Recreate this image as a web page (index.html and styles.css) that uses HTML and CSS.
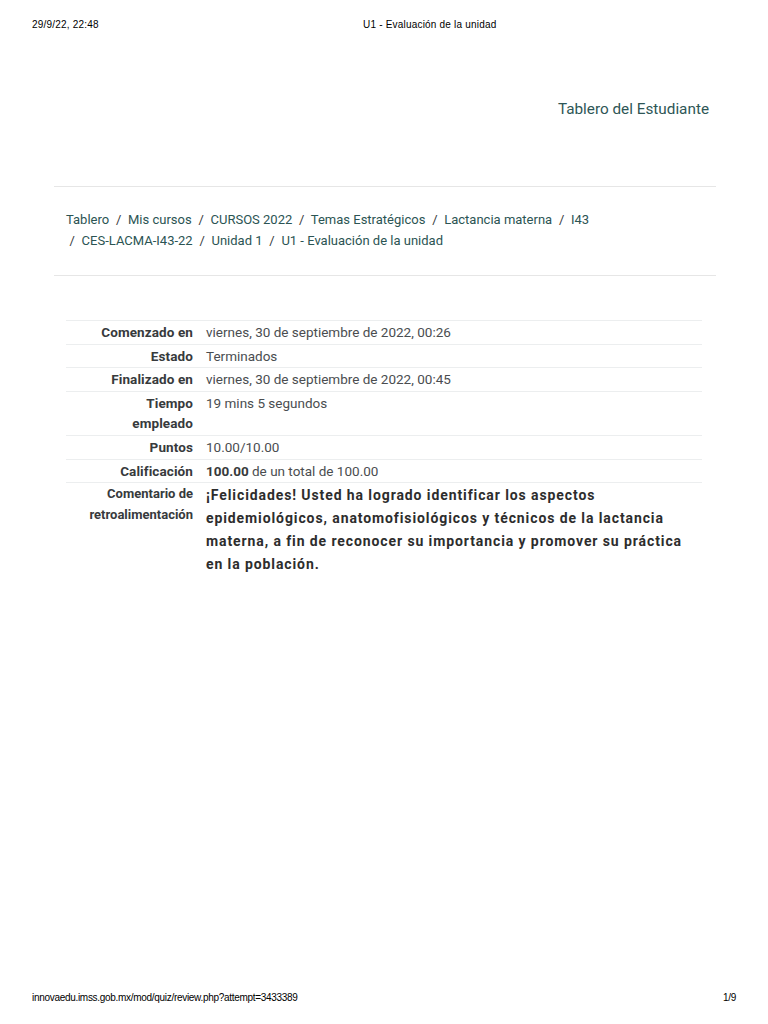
FILE: index.html
```html
<!DOCTYPE html>
<html lang="es">

<head>
    <meta charset="UTF-8">
    <meta name="viewport" content="width=device-width, initial-scale=1.0">
    <title>U1 - Evaluación de la unidad</title>
    <link rel="stylesheet" href="styles.css">
</head>

<body>
    <div class="page">
        <header class="print-header">
            <span class="print-date">29/9/22, 22:48</span>
            <span class="print-title">U1 - Evaluación de la unidad</span>
        </header>

        <div class="site-nav">
            <a href="#" class="site-link">Tablero del Estudiante</a>
        </div>

        <nav class="breadcrumb">
            <a href="#">Tablero</a> <span class="sep">/</span>
            <a href="#">Mis cursos</a> <span class="sep">/</span>
            <a href="#">CURSOS 2022</a> <span class="sep">/</span>
            <a href="#">Temas Estratégicos</a> <span class="sep">/</span>
            <a href="#">Lactancia materna</a> <span class="sep">/</span>
            <a href="#">I43</a><br>
            <span class="sep">/</span> <a href="#">CES-LACMA-I43-22</a> <span class="sep">/</span>
            <a href="#">Unidad 1</a> <span class="sep">/</span>
            <a href="#">U1 - Evaluación de la unidad</a>
        </nav>

        <table class="summary">
            <tr>
                <th>Comenzado en</th>
                <td>viernes, 30 de septiembre de 2022, 00:26</td>
            </tr>
            <tr>
                <th>Estado</th>
                <td>Terminados</td>
            </tr>
            <tr>
                <th>Finalizado en</th>
                <td>viernes, 30 de septiembre de 2022, 00:45</td>
            </tr>
            <tr>
                <th>Tiempo<br>empleado</th>
                <td>19 mins 5 segundos</td>
            </tr>
            <tr>
                <th>Puntos</th>
                <td>10.00/10.00</td>
            </tr>
            <tr>
                <th>Calificación</th>
                <td><b>100.00</b> de un total de 100.00</td>
            </tr>
            <tr class="feedback-row">
                <th>Comentario de<br>retroalimentación</th>
                <td>
                    <p class="feedback">¡Felicidades! Usted ha logrado identificar los aspectos epidemiológicos,
                        anatomofisiológicos y técnicos de la lactancia materna, a fin de reconocer su importancia y
                        promover su práctica en la población.</p>
                </td>
            </tr>
        </table>

        <footer class="print-footer">
            <span>innovaedu.imss.gob.mx/mod/quiz/review.php?attempt=3433389</span>
            <span>1/9</span>
        </footer>
    </div>
</body>

</html>
```

FILE: styles.css
```css
body {
    margin: 0;
    background-color: white;
    font-family: Roboto, "Liberation Sans", Arial, sans-serif;
    color: #373a3c;
}

.page {
    height: 1024px;
    display: flex;
    flex-direction: column;
}

.print-header {
    display: flex;
    padding: 19px 32px 0;
    font-family: "Liberation Sans", Arial, sans-serif;
    font-size: 10px;
    color: #000;
    letter-spacing: 0.2px;
}

.print-date {
    width: 331px;
}

.site-nav {
    display: flex;
    justify-content: flex-end;
    padding: 70px 59px 0 0;
}

.site-link {
    font-size: 15.3px;
    color: #2e5656;
    text-decoration: none;
}

.breadcrumb {
    margin: 68px 52px 0 54px;
    padding: 22px 12px 24px;
    border-top: 1px solid #e6e6e6;
    border-bottom: 1px solid #e6e6e6;
    font-size: 13px;
    line-height: 21px;
    color: #373a3c;
}

.breadcrumb a {
    color: #2b5453;
    text-decoration: none;
}

.breadcrumb .sep {
    margin: 0 3.5px;
}

.summary {
    margin: 44px 66px 0 66px;
    width: 636px;
    border-collapse: collapse;
    font-size: 13.5px;
}

.summary th,
.summary td {
    border-top: 1px solid #eceeef;
    padding: 1px 0;
    line-height: 20.6px;
    vertical-align: top;
}

.summary th {
    width: 127px;
    text-align: right;
    font-weight: bold;
    padding-right: 13px;
    letter-spacing: 0.1px;
}

.summary td {
    color: #4a4d50;
}

.summary td b {
    color: #373a3c;
}

.feedback-row th {
    font-size: 13px;
    letter-spacing: 0;
}

.feedback {
    margin: 0;
    max-width: 486px;
    font-size: 14px;
    font-weight: bold;
    letter-spacing: 0.9px;
    line-height: 23px;
    color: #2d2d2d;
}

.print-footer {
    margin-top: auto;
    display: flex;
    justify-content: space-between;
    padding: 0 32px 21px;
    font-family: "Liberation Sans", Arial, sans-serif;
    font-size: 10px;
    color: #000;
    letter-spacing: -0.3px;
}
```
